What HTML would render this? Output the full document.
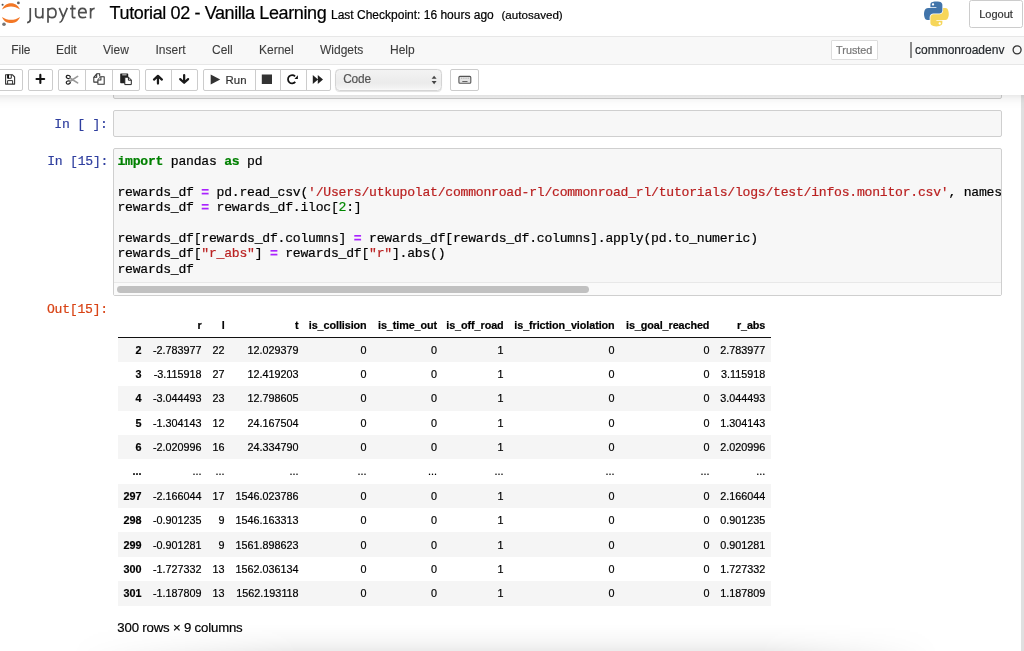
<!DOCTYPE html>
<html><head><meta charset="utf-8">
<style>
*{box-sizing:border-box}
html,body{margin:0;padding:0}
body{will-change:transform;width:1024px;height:651px;overflow:hidden;position:relative;background:#fff;font-family:"Liberation Sans",sans-serif;color:#000;-webkit-text-stroke-width:0.2px}
.t{position:absolute;white-space:pre;line-height:1}
.m{font-family:"Liberation Mono",monospace}
.abs{position:absolute}
#hdr{position:absolute;left:0;top:0;width:1024px;height:95px;background:#fff;z-index:2}
#menubar{position:absolute;left:0;top:36px;width:1024px;height:28.6px;background:#f8f8f8;border-top:1px solid #e7e7e7;border-bottom:1px solid #e7e7e7}
.menu{font-size:12px;color:#3c3c3c;top:7.05px;-webkit-text-stroke-width:0.1px}
.btn{position:absolute;top:69.2px;height:21.4px;border:1px solid #ccc;border-radius:2px;background:#fff}
.dv{position:absolute;top:0;bottom:0;width:1px;background:#ccc}
.ia{position:absolute;left:113px;width:889px;border:1px solid #cfcfcf;border-radius:2px;background:#f7f7f7}
.prompt{font-size:13.1px;letter-spacing:-0.233px;color:#303f9f}
.code{position:absolute;left:117px;top:154.46px;font-family:"Liberation Mono",monospace;font-size:13.1px;letter-spacing:-0.233px;line-height:15.31px;white-space:pre;color:#000}
.kw{color:#008000;font-weight:bold}
.op{color:#aa22ff;font-weight:bold}
.st{color:#ba2121}
.nu{color:#080}
table.df{position:absolute;left:118.2px;top:314px;border-collapse:collapse;border-spacing:0;font-size:10.8px;table-layout:fixed;width:652.5px}
table.df th,table.df td{text-align:right;vertical-align:middle;padding:0 5.4px 0 0;white-space:nowrap;line-height:normal;overflow:visible}
table.df thead tr{height:23.4px}
table.df thead th{vertical-align:bottom;padding-bottom:6.1px;border-bottom:1px solid #111}
table.df tbody tr{height:24.38px}
table.df tbody tr:nth-child(odd){background:#f5f5f5}
table.df th{font-weight:bold}
table.df thead th{letter-spacing:-0.08px}
</style></head><body>

<div id="hdr">
<svg class="abs" style="left:0;top:0" width="24" height="27" viewBox="0 0 24 27">
<path d="M2,9.6C4,4.5 8,3.2 11,3.2C14,3.2 18,4.5 20,9.6C17,7.5 14,6.4 11,6.4C8,6.4 5,7.5 2,9.6Z" fill="#F37726"/>
<path d="M2,17C4,22 8,23.1 11,23.1C14,23.1 18,22 20,17C17,19 14,19.8 11,19.8C8,19.8 5,19 2,17Z" fill="#F37726"/>
<circle cx="18.4" cy="2.9" r="1.4" fill="#616262"/>
<circle cx="2.6" cy="4.8" r="1.05" fill="#555"/>
<circle cx="4" cy="24.3" r="1.8" fill="#767677"/>
</svg>
<svg class="abs" style="left:0;top:0" width="100" height="30" viewBox="0 0 100 30"><g fill="none" stroke="#4e4e4e" stroke-width="1.7">
<path d="M30.25,7.9V19.5Q30.25,22.4 27.1,22.6"/>
<path d="M35.7,7.9V14.6Q35.7,17.7 39.2,17.7Q42.8,17.7 42.8,14.3M42.8,7.9V18.5"/>
<path d="M48,7.9V22.8M48,10.6Q49.2,8.3 52,8.3Q56,8.3 56,13Q56,17.7 52,17.7Q49.2,17.7 48,15.4"/>
<path d="M59.3,7.9L63.4,17.6M67.3,7.9L62.2,20Q61.2,22.3 59.5,22.4"/>
<path d="M72.4,5.3V16.2Q72.4,17.7 74.2,17.7H75.5M70,8.6H75.7"/>
<path d="M78.5,12.6H86.1Q86.1,8.3 82.4,8.3Q78.7,8.3 78.7,13Q78.7,17.7 82.6,17.7Q84.8,17.7 86.1,17.1"/>
<path d="M90.6,7.9V18.5M90.6,12.3Q91.2,8.6 94.7,8.4"/>
</g></svg>
<div class="t" style="left:109.6px;top:3.6px;font-size:18px;letter-spacing:-0.38px">Tutorial 02 - Vanilla Learning</div>
<div class="t" style="left:331px;top:8.85px;font-size:12px">Last Checkpoint: 16 hours ago</div>
<div class="t" style="left:501.5px;top:8.85px;font-size:11.6px">(autosaved)</div>

<svg class="abs" style="left:924px;top:1px" width="25" height="26" viewBox="0 0 112 112">
<path fill="#4174aa" d="M54.9,0C50.3,0 45.9,0.4 42.1,1.1 30.8,3.1 28.7,7.3 28.7,15V25.3H55.5V28.7H18.6C10.8,28.7 4,33.3 1.9,42.3-0.6,52.5-0.7,58.8 1.9,69.5 3.8,77.4 8.3,83.1 16.1,83.1H25.3V70.8C25.3,62 33,54.2 42.1,54.2H68.9C76.3,54.2 82.3,48 82.3,40.6V15C82.3,7.8 76.1,2.3 68.9,1.1 64.3,0.3 59.5,0 54.9,0ZM40.4,8.2C43.2,8.2 45.5,10.5 45.5,13.3 45.5,16.1 43.2,18.4 40.4,18.4 37.6,18.4 35.4,16.1 35.4,13.3 35.4,10.5 37.6,8.2 40.4,8.2Z"/>
<path fill="#f6d65a" d="M85.6,28.7V40.6C85.6,49.8 77.8,57.6 68.9,57.6H42.1C34.8,57.6 28.7,63.9 28.7,71.2V96.7C28.7,104 35,108.3 42.1,110.3 50.6,112.8 58.7,113.3 68.9,110.3 75.6,108.4 82.3,104.4 82.3,96.7V86.5H55.5V83.1H95.7C103.5,83.1 106.4,77.7 109.1,69.5 111.9,61.1 111.8,53 109.1,42.3 107.2,34.5 103.5,28.7 95.7,28.7ZM70.6,93.3C73.4,93.3 75.6,95.6 75.6,98.4 75.6,101.2 73.4,103.5 70.6,103.5 67.8,103.5 65.5,101.2 65.5,98.4 65.5,95.6 67.8,93.3 70.6,93.3Z"/>
</svg>
<div class="abs" style="left:969.3px;top:0.3px;width:54.2px;height:27.4px;border:1px solid #ccc;border-radius:2.5px;background:#fff"></div>
<div class="t" style="left:979.2px;top:8.5px;font-size:11px;color:#333">Logout</div>

<div id="menubar">
<div class="t menu" style="left:11.2px">File</div>
<div class="t menu" style="left:56px">Edit</div>
<div class="t menu" style="left:103px">View</div>
<div class="t menu" style="left:155.5px">Insert</div>
<div class="t menu" style="left:212px">Cell</div>
<div class="t menu" style="left:259px">Kernel</div>
<div class="t menu" style="left:320px">Widgets</div>
<div class="t menu" style="left:390px">Help</div>
<div class="abs" style="left:831.1px;top:3.4px;width:47.3px;height:19.5px;border:1px solid #ddd;border-radius:1px;background:#fff"></div>
<div class="t" style="left:836.1px;top:7.9px;font-size:10.8px;color:#777">Trusted</div>
<div class="abs" style="left:910.2px;top:5.0px;width:1.7px;height:16.2px;background:#8a8a8a"></div>
<div class="t" style="left:915px;top:6.85px;font-size:12px;color:#262a2e">commonroadenv</div>
<svg class="abs" style="left:1011px;top:7.1px" width="13" height="13" viewBox="0 0 13 13"><circle cx="6.1" cy="5.85" r="4" fill="none" stroke="#333" stroke-width="1.3"/></svg>
</div>

<!-- toolbar buttons -->
<div class="btn" style="left:-5px;width:27.55px"></div>
<div class="btn" style="left:27.8px;width:24.9px"></div>
<div class="btn" style="left:58.35px;width:81.55px"><div class="dv" style="left:26px"></div><div class="dv" style="left:53.1px"></div></div>
<div class="btn" style="left:145.2px;width:52.6px"><div class="dv" style="left:25.2px"></div></div>
<div class="btn" style="left:203.4px;width:128.1px"><div class="dv" style="left:50.4px"></div><div class="dv" style="left:76.1px"></div><div class="dv" style="left:101.7px"></div></div>
<div class="abs" style="left:335.2px;top:69.2px;width:107.3px;height:21.5px;border:1px solid #d4d4d4;border-radius:4.5px;background:linear-gradient(#f3f3f3,#ebebeb 65%,#f3f3f3 90%,#fafafa);box-shadow:0 0.6px 0.8px rgba(0,0,0,0.12)"></div>
<div class="btn" style="left:450.3px;width:29.2px"></div>

<svg class="abs" style="left:0;top:64px;z-index:3" width="490" height="31" viewBox="0 64 490 31">
<g fill="none" stroke="#333" stroke-linejoin="round">
<!-- save -->
<path d="M5.6,74.7H12.3L14.6,77V84.1H5.6Z" stroke-width="1.1"/>
<path d="M7.6,74.7V78.3H11.3V74.7" stroke-width="1"/>
<path d="M7.6,84.1V80.6H12.6V84.1" stroke-width="1"/>
</g>
<rect x="7.4" y="74.5" width="1.6" height="3.8" fill="#111"/>
<!-- plus -->
<path d="M40.35,74.9V83M36.5,78.95H44.2" stroke="#111" stroke-width="2.1" stroke-linecap="round"/>
<!-- scissors -->
<g fill="none" stroke="#222" stroke-width="1.2">
<ellipse cx="68.3" cy="77" rx="2.05" ry="1.55" transform="rotate(20 68.3 77)"/>
<ellipse cx="68.3" cy="82.45" rx="2.05" ry="1.55" transform="rotate(-20 68.3 82.45)"/>
</g>
<path d="M70.2,78.2L77.6,82.9M70.2,81.3L77.6,76.4" stroke="#9a9a9a" stroke-width="1.7" stroke-linecap="round"/>
<!-- copy -->
<g fill="#fff" stroke="#333" stroke-width="1.05" stroke-linejoin="round">
<path d="M96.7,73.8H99.7V76.6M96.7,73.8L93.8,77.4V82.1H98"/>
<path d="M100.9,76.7H104.2V84.3H97.9V79.9Z"/>
<path d="M97.9,79.9H100.9V76.7"/>
<path d="M96.7,73.8V77.3H93.8" fill="none"/>
</g>
<!-- paste -->
<rect x="120.2" y="73.4" width="8" height="9.8" rx="0.7" fill="#222"/>
<rect x="122.2" y="73.9" width="4.4" height="1.6" fill="#999"/>
<path d="M124.8,77.2H128.6L131.3,80V84.6H124.8Z" fill="#fff" stroke="#222" stroke-width="1"/>
<path d="M128.4,77.2V80.2H131.3" fill="none" stroke="#222" stroke-width="1"/>
<!-- up -->
<path d="M157.95,83.6V76.6M154,79.6L157.95,75.9L161.9,79.6" fill="none" stroke="#1a1a1a" stroke-width="2.25" stroke-linecap="round" stroke-linejoin="round"/>
<!-- down -->
<path d="M184.15,75.1V82.4M180.2,79.1L184.15,82.8L188.1,79.1" fill="none" stroke="#1a1a1a" stroke-width="2.25" stroke-linecap="round" stroke-linejoin="round"/>
<!-- run -->
<path d="M210.7,74.5L220.2,79.5L210.7,84.5Z" fill="#333"/>
<!-- stop -->
<rect x="261.8" y="74.5" width="10.2" height="9.5" fill="#333"/>
<!-- restart -->
<path d="M295.1,76.3A4.15,4.15 0 1 0 295.3,81.9" fill="none" stroke="#111" stroke-width="1.7"/>
<path d="M294.5,79L297.9,79L297.9,75.2Z" fill="#111"/>
<!-- ff -->
<path d="M312.8,75L318,79.5L312.8,84ZM317.8,75L323,79.5L317.8,84Z" fill="#222"/>
<!-- select arrows -->
<path d="M431.6,78.8L434.1,75.7L436.6,78.8ZM431.6,80.9L434.1,84.3L436.6,80.9Z" fill="#444"/>
<!-- keyboard -->
<rect x="458.9" y="76.4" width="11.9" height="6.9" rx="1" fill="#e4e4e4" stroke="#555" stroke-width="1.1"/>
<path d="M462.3,81.5H467.5" stroke="#555" stroke-width="0.9"/>
<path d="M461,78.2H469" stroke="#999" stroke-width="0.8" stroke-dasharray="0.9,0.9"/>
</svg>
<div class="t" style="left:225.6px;top:74.8px;font-size:11.4px;color:#333">Run</div>
<div class="t" style="left:343.2px;top:74.2px;font-size:11.9px;letter-spacing:-0.15px;color:#555">Code</div>
</div>

<!-- header shadow -->
<div class="abs" style="left:0;top:95px;width:1024px;height:14px;background:linear-gradient(rgba(0,0,0,0.085),rgba(0,0,0,0.038) 28%,rgba(0,0,0,0.012) 58%,rgba(0,0,0,0));z-index:1"></div>

<!-- notebook -->
<div class="abs" style="left:1021px;top:95px;width:3px;height:556px;background:#e0e0e0"></div>

<div class="ia" style="top:60px;height:39px"></div>
<div class="t m prompt" style="left:54.3px;top:117.5px">In [ ]:</div>
<div class="ia" style="top:110px;height:27px"></div>
<div class="t m prompt" style="left:47.2px;top:155.1px">In [15]:</div>
<div class="ia" style="top:148px;height:148px"></div>
<div class="abs" style="left:114.3px;top:149.3px;width:886.9px;height:145.7px;overflow:hidden">
<div class="code" style="left:3.1px;top:5.1px"><span class="kw">import</span> pandas <span class="kw">as</span> pd

rewards_df <span class="op">=</span> pd.read_csv(<span class="st">'/Users/utkupolat/commonroad-rl/commonroad_rl/tutorials/logs/test/infos.monitor.csv'</span>, names=[<span class="st">"r"</span>])
rewards_df <span class="op">=</span> rewards_df.iloc[<span class="nu">2</span>:]

rewards_df[rewards_df.columns] <span class="op">=</span> rewards_df[rewards_df.columns].apply(pd.to_numeric)
rewards_df[<span class="st">"r_abs"</span>] <span class="op">=</span> rewards_df[<span class="st">"r"</span>].abs()
rewards_df</div>
<div class="abs" style="left:0;top:132.7px;width:886.9px;height:13px;background:#fafafa;border-top:1px solid #e8e8e8"></div>
<div class="abs" style="left:2.7px;top:136.7px;width:471.8px;height:6.8px;border-radius:3.4px;background:#c1c1c1"></div>
</div>

<div class="t m" style="left:47px;top:303.1px;font-size:13.1px;letter-spacing:-0.233px;color:#d84315">Out[15]:</div>

<table class="df"><colgroup><col style="width:28.8px"><col style="width:60px"><col style="width:23px"><col style="width:74px"><col style="width:68px"><col style="width:70.5px"><col style="width:66.5px"><col style="width:111px"><col style="width:94.8px"><col style="width:55.9px"></colgroup><thead><tr><th></th><th>r</th><th>l</th><th>t</th><th>is_collision</th><th>is_time_out</th><th>is_off_road</th><th>is_friction_violation</th><th>is_goal_reached</th><th>r_abs</th></tr></thead><tbody><tr><th>2</th><td>-2.783977</td><td>22</td><td>12.029379</td><td>0</td><td>0</td><td>1</td><td>0</td><td>0</td><td>2.783977</td></tr><tr><th>3</th><td>-3.115918</td><td>27</td><td>12.419203</td><td>0</td><td>0</td><td>1</td><td>0</td><td>0</td><td>3.115918</td></tr><tr><th>4</th><td>-3.044493</td><td>23</td><td>12.798605</td><td>0</td><td>0</td><td>1</td><td>0</td><td>0</td><td>3.044493</td></tr><tr><th>5</th><td>-1.304143</td><td>12</td><td>24.167504</td><td>0</td><td>0</td><td>1</td><td>0</td><td>0</td><td>1.304143</td></tr><tr><th>6</th><td>-2.020996</td><td>16</td><td>24.334790</td><td>0</td><td>0</td><td>1</td><td>0</td><td>0</td><td>2.020996</td></tr><tr><th>...</th><td>...</td><td>...</td><td>...</td><td>...</td><td>...</td><td>...</td><td>...</td><td>...</td><td>...</td></tr><tr><th>297</th><td>-2.166044</td><td>17</td><td>1546.023786</td><td>0</td><td>0</td><td>1</td><td>0</td><td>0</td><td>2.166044</td></tr><tr><th>298</th><td>-0.901235</td><td>9</td><td>1546.163313</td><td>0</td><td>0</td><td>1</td><td>0</td><td>0</td><td>0.901235</td></tr><tr><th>299</th><td>-0.901281</td><td>9</td><td>1561.898623</td><td>0</td><td>0</td><td>1</td><td>0</td><td>0</td><td>0.901281</td></tr><tr><th>300</th><td>-1.727332</td><td>13</td><td>1562.036134</td><td>0</td><td>0</td><td>1</td><td>0</td><td>0</td><td>1.727332</td></tr><tr><th>301</th><td>-1.187809</td><td>13</td><td>1562.193118</td><td>0</td><td>0</td><td>1</td><td>0</td><td>0</td><td>1.187809</td></tr></tbody></table>

<div class="t" style="left:117.3px;top:621.3px;font-size:13.2px;letter-spacing:-0.17px">300 rows × 9 columns</div>

<div class="abs" style="left:0;top:624px;width:1021px;height:27px;background:linear-gradient(rgba(0,0,0,0),rgba(0,0,0,0.01) 28%,rgba(0,0,0,0.03) 60%,rgba(0,0,0,0.05) 80%,rgba(0,0,0,0.08));-webkit-mask-image:linear-gradient(to right,transparent 70px,#000 300px,#000 760px,transparent 940px)"></div>
</body></html>
